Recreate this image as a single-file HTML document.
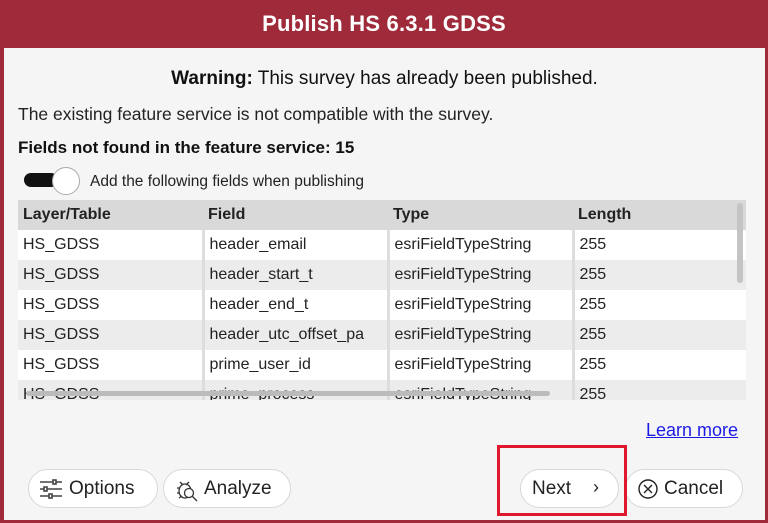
<!DOCTYPE html>
<html><head><style>
*{margin:0;padding:0;box-sizing:border-box}
body{width:768px;height:523px;background:#9e2a3a;font-family:"Liberation Sans",sans-serif;position:relative;overflow:hidden;color:#111}
#title{position:absolute;left:0;top:0;width:768px;height:48px;color:#fff;font-size:22px;text-align:center;line-height:48px;font-weight:bold;letter-spacing:0.2px}
#body{position:absolute;left:4px;top:48px;width:761px;height:472px;background:#f5f5f5}
.t{position:absolute;white-space:nowrap}
table{border-collapse:collapse;position:absolute;left:14px;top:152px;width:728px;table-layout:fixed}
td,th{height:30px;font-size:16px;text-align:left;padding-left:5px;border-left:3px solid #ddd;font-weight:normal;color:#222;white-space:nowrap;overflow:hidden}
th{background:#d9d9d9;font-weight:bold;border-left:none}
td:first-child{border-left:none}
tr:nth-child(odd) td{background:#ececec}
tr:nth-child(even) td{background:#fff}
.btn{position:absolute;top:421px;height:39px;border:1px solid #d8d8d8;border-radius:20px;background:#fff;font-size:19px;line-height:37px;color:#222}
</style></head><body>
<div id="title">Publish HS 6.3.1 GDSS</div>
<div id="body">
<div class="t" style="left:0;width:761px;text-align:center;top:20px;font-size:19px"><b>Warning:</b> This survey has already been published.</div>
<div class="t" style="left:14px;top:56px;font-size:17.5px;color:#222">The existing feature service is not compatible with the survey.</div>
<div class="t" style="left:14px;top:90px;font-size:17px;font-weight:bold">Fields not found in the feature service: 15</div>
<div style="position:absolute;left:20px;top:125px;width:34px;height:14px;border-radius:7px;background:#111"></div>
<div style="position:absolute;left:48px;top:119px;width:28px;height:28px;border-radius:50%;background:#fff;border:1px solid #aaa"></div>
<div class="t" style="left:86px;top:125px;font-size:15.5px;color:#222">Add the following fields when publishing</div>
<div style="position:absolute;left:14px;top:152px;width:728px;height:200px;overflow:hidden">
<table style="left:0;top:0">
<tr><th style="width:185px">Layer/Table</th><th style="width:185px">Field</th><th style="width:185px">Type</th><th>Length</th></tr>
<tr><td>HS_GDSS</td><td>header_email</td><td>esriFieldTypeString</td><td>255</td></tr>
<tr><td>HS_GDSS</td><td>header_start_t</td><td>esriFieldTypeString</td><td>255</td></tr>
<tr><td>HS_GDSS</td><td>header_end_t</td><td>esriFieldTypeString</td><td>255</td></tr>
<tr><td>HS_GDSS</td><td>header_utc_offset_pa</td><td>esriFieldTypeString</td><td>255</td></tr>
<tr><td>HS_GDSS</td><td>prime_user_id</td><td>esriFieldTypeString</td><td>255</td></tr>
<tr><td>HS_GDSS</td><td>prime_process</td><td>esriFieldTypeString</td><td>255</td></tr>
</table>
<div style="position:absolute;left:8px;top:191px;width:524px;height:5px;border-radius:3px;background:#bbb"></div>
<div style="position:absolute;left:719px;top:3px;width:6px;height:80px;border-radius:3px;background:#c4c4c4"></div>
</div>
<div class="t" style="left:642px;top:372px;font-size:18px;color:#1a1ae6;text-decoration:underline">Learn more</div>
<div class="btn" style="left:24px;width:130px;padding-left:40px">Options
<svg style="position:absolute;left:10px;top:9px" width="24" height="20" viewBox="0 0 24 20" fill="none" stroke="#444" stroke-width="1.6"><path d="M1 3h22M1 10h22M1 17h22"/><rect x="14" y="1" width="3" height="4" fill="#fff"/><rect x="5" y="8" width="3" height="4" fill="#fff"/><rect x="10" y="15" width="3" height="4" fill="#fff"/></svg></div>
<div class="btn" style="left:159px;width:128px;padding-left:40px">Analyze
<svg style="position:absolute;left:10px;top:8px" width="26" height="24" viewBox="0 0 26 24" fill="none" stroke="#333" stroke-width="1.3"><path d="M6 4l3 3M15 4l-3 3M3 10h3M3 15h3M5 20l3-2"/><ellipse cx="11" cy="13" rx="6" ry="7"/><circle cx="15" cy="15" r="4.5" fill="#fff"/><path d="M18 18l5 5"/></svg></div>
<div class="btn" style="left:516px;width:99px;padding-left:11px">Next<span style="position:absolute;left:72px;top:-1px;font-size:18px">&#x203A;</span></div>
<div class="btn" style="left:621px;width:118px;padding-left:38px">Cancel
<svg style="position:absolute;left:12px;top:9px" width="20" height="20" viewBox="0 0 20 20" fill="none" stroke="#222" stroke-width="1.4"><circle cx="10" cy="10" r="9"/><path d="M6 6l8 8M14 6l-8 8"/></svg></div>
<div style="position:absolute;left:493px;top:397px;width:130px;height:71px;border:3px solid #e0182b"></div>
</div>
</body></html>
